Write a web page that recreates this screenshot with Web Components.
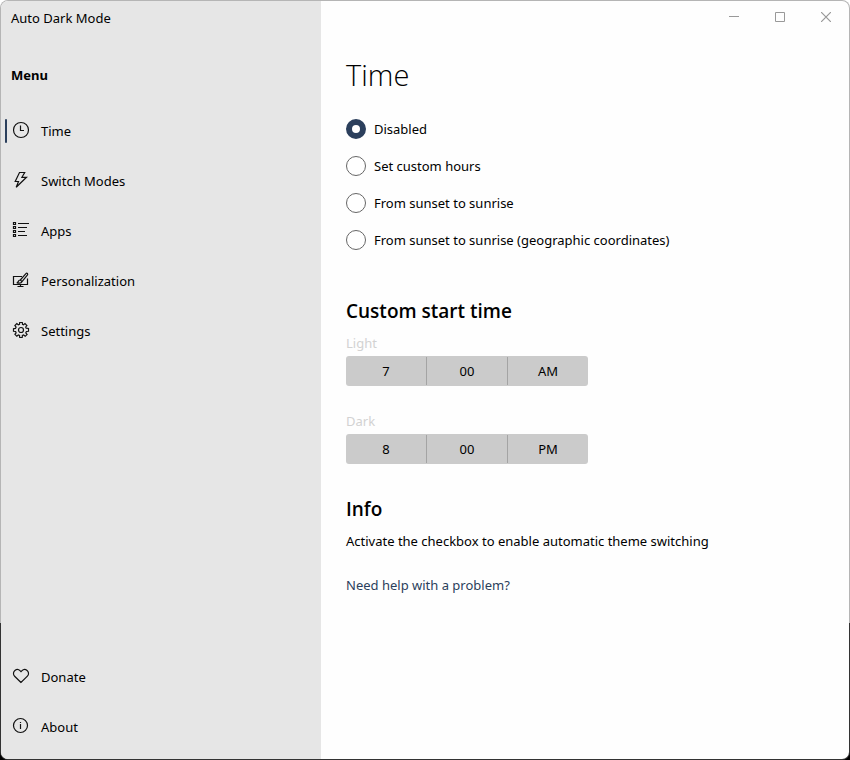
<!DOCTYPE html>
<html lang="en">
<head>
<meta charset="utf-8">
<meta name="viewport" content="width=device-width, initial-scale=1">
<title>Auto Dark Mode</title>
<style>
  html, body {
    margin: 0;
    height: 100%;
  }

  body {
    background: linear-gradient(#fff 50%, #000 50%);
    color: #000;
    font: 13px/20px "Noto Sans", "Open Sans", sans-serif;
    --accent: #2b3f5c;
  }
</style>
</head>
<body>
<app-window>
  <app-sidebar slot="sidebar" heading="Auto Dark Mode">
    <nav-item icon="time" active>Time</nav-item>
    <nav-item icon="switch">Switch Modes</nav-item>
    <nav-item icon="apps">Apps</nav-item>
    <nav-item icon="personalization">Personalization</nav-item>
    <nav-item icon="settings">Settings</nav-item>
    <nav-item slot="footer" icon="donate">Donate</nav-item>
    <nav-item slot="footer" icon="about">About</nav-item>
  </app-sidebar>
  <time-page></time-page>
</app-window>

<script>
const ICONS = {
  time: '<circle cx="8" cy="8" r="7.5"/><path d="M7.5 3.500v5H11"/>',
  switch: '<path d="M6.500.5h5.200L8.900 5.300h4.600L3.200 15.300l2.300-5.800H2.200z"/>',
  apps: `<path d="M.5.5h2v2h-2zM.5 4.500h2v2h-2zM.5 8.500h2v2h-2zM.5 12.500h2v2h-2z"/>
    <path d="M5 1.500h11M5 5.500h9M5 9.500h7M5 13.500h9"/>`,
  personalization: `<path d="M9 4.500H.5v8h14V6.500M7.500 12.500v2M4.500 14.500h6"/>
    <path d="M7.300 8 12.700 1.800q1-1 1.700-.4.700.7-.1 1.800L9 9.600zM7.300 8q-1.600.1-2 1.500-.3 1-1.500 1.300 4.500 1.100 5.200-1.200"/>`,
  settings: `<circle cx="8" cy="8" r="2.500"/>
    <path d="M6.500 2.400 6.700.5h2.600l.2 1.900 1 .4 1.500-1.200L13.900 3.500l-1.200 1.500.5 1.200 2.300.3v2.800l-2.100.2-.6 1.300 1.300 1.600-1.900 1.900-1.600-1.300-1.200.5-.2 2H6.700l-.2-2-1.200-.5-1.500 1.200-1.900-1.900 1.200-1.500-.5-1.300L.5 9.300V6.700l2-.3.6-1.300-1.200-1.600 1.900-1.900 1.500 1.200z"/>`,
  donate: '<path d="M8 14.500 1.600 8.200C-.1 6.500.2 3.700 1.900 2.400 3.600 1.100 5.700 1.300 7 2.700l1 1 1-1c1.300-1.400 3.400-1.600 5.100-.3 1.700 1.300 2 4.100.3 5.800z"/>',
  about: '<circle cx="7.500" cy="7.500" r="7"/><path d="M7.500 6v5M7.500 4v1"/>'
};

class AppWindow extends HTMLElement {
  constructor() {
    super();
    this.attachShadow({ mode: 'open' });
    this.shadowRoot.innerHTML = `
      <style>
        :host {
          display: block;
          box-sizing: border-box;
          min-height: 100vh;
          padding: 1px;
          border-radius: 8px;
          background: linear-gradient(#b5b5b5 82%, #333 82%);
        }

        .frame {
          display: grid;
          grid-template-columns: 320px 1fr;
          min-height: calc(100vh - 2px);
          border-radius: 7px;
          overflow: hidden;
          background: #fefefe;
        }

        .pane {
          display: flex;
          flex-direction: column;
        }
      </style>
      <div class="frame">
        <slot name="sidebar"></slot>
        <div class="pane">
          <window-controls></window-controls>
          <slot></slot>
        </div>
      </div>
    `;
  }
}

class WindowControls extends HTMLElement {
  constructor() {
    super();
    this.attachShadow({ mode: 'open' });
    this.shadowRoot.innerHTML = `
      <style>
        :host {
          display: flex;
          justify-content: flex-end;
        }

        button {
          display: grid;
          place-items: center;
          width: 46px;
          height: 32px;
          padding: 0;
          border: 0;
          background: none;
        }

        svg {
          width: 10px;
          height: 10px;
          fill: none;
          stroke: #999;
        }
      </style>
      <button aria-label="Minimize"><svg viewBox="0 0 10 10"><path d="M0 4.500h10"/></svg></button>
      <button aria-label="Maximize"><svg viewBox="0 0 10 10"><path d="M.5.5h9v9h-9z"/></svg></button>
      <button aria-label="Close"><svg viewBox="0 0 10 10"><path stroke-width="1.200" d="M0 0l10 10M10 0L0 10"/></svg></button>
    `;
  }
}

class AppSidebar extends HTMLElement {
  constructor() {
    super();
    this.attachShadow({ mode: 'open' });
    this.shadowRoot.innerHTML = `
      <style>
        :host {
          display: flex;
          flex-direction: column;
          padding: 7px 0;
          background: #e6e6e6;
        }

        header {
          padding: 0 10px;
        }

        h2 {
          margin: 37px 10px 21px;
          font-size: 13px;
          font-weight: 700;
        }

        .footer {
          margin-top: auto;
        }
      </style>
      <header>${this.getAttribute('heading')}</header>
      <h2>Menu</h2>
      <nav><slot></slot></nav>
      <div class="footer"><slot name="footer"></slot></div>
    `;
  }
}

class NavItem extends HTMLElement {
  constructor() {
    super();
    this.attachShadow({ mode: 'open' });
    this.shadowRoot.innerHTML = `
      <style>
        :host {
          display: block;
        }

        a {
          display: grid;
          grid-template-columns: 2px 16px 1fr;
          column-gap: 6px;
          align-items: center;
          height: 50px;
          padding-left: 4px;
          color: inherit;
          text-decoration: none;
        }

        .mark {
          height: 24px;
          border-radius: 1px;
        }

        :host([active]) .mark {
          background: var(--accent);
        }

        svg {
          width: 16px;
          height: 16px;
          margin-bottom: 2px;
          overflow: visible;
          fill: none;
          stroke: #111;
          stroke-width: 1.2;
        }

        .label {
          padding-left: 6px;
        }
      </style>
      <a href="#${this.getAttribute('icon')}">
        <span class="mark"></span>
        <svg viewBox="0 0 16 16" aria-hidden="true">${ICONS[this.getAttribute('icon')]}</svg>
        <span class="label"><slot></slot></span>
      </a>
    `;
  }
}

class TimePicker extends HTMLElement {
  constructor() {
    super();
    this.attachShadow({ mode: 'open' });
    const parts = this.getAttribute('value').split(' ');
    this.shadowRoot.innerHTML = `
      <style>
        :host {
          display: block;
        }

        .label {
          height: 20px;
          margin-bottom: 3px;
          color: #d2d2d2;
        }

        .picker {
          display: grid;
          grid-template-columns: 80px 81px 81px;
          width: max-content;
          padding: 1px 0;
          border-radius: 3px;
          background: #cbcbcb;
        }

        button {
          height: 28px;
          padding: 0 0 1px;
          border: 0;
          background: none;
          color: #000;
          font: inherit;
        }

        button + button {
          border-left: 1px solid #a4a4a4;
        }
      </style>
      <div class="label" id="label"><slot></slot></div>
      <div class="picker" role="group" aria-labelledby="label">
        ${parts.map(part => `<button disabled>${part}</button>`).join('')}
      </div>
    `;
  }
}

class ModeOptions extends HTMLElement {
  constructor() {
    super();
    this.attachShadow({ mode: 'open' });
    const options = [
      'Disabled',
      'Set custom hours',
      'From sunset to sunrise',
      'From sunset to sunrise (geographic coordinates)'
    ];
    this.shadowRoot.innerHTML = `
      <style>
        :host {
          display: grid;
          gap: 17px;
        }

        label {
          display: flex;
          align-items: center;
          gap: 8px;
        }

        input {
          appearance: none;
          box-sizing: border-box;
          flex: none;
          width: 20px;
          height: 20px;
          margin: 0;
          border: 1px solid #666;
          border-radius: 50%;
          background: #fff;
        }

        input:checked {
          border: 6px solid var(--accent);
        }
      </style>
      ${options.map((text, i) => `
        <label><input type="radio" name="mode" ${i === 0 ? 'checked' : ''}>${text}</label>
      `).join('')}
    `;
  }
}

class TimePage extends HTMLElement {
  constructor() {
    super();
    this.attachShadow({ mode: 'open' });
    this.shadowRoot.innerHTML = `
      <style>
        :host {
          display: block;
          padding: 22px 25px;
        }

        h1 {
          margin: 0 0 24px;
          font-family: "Open Sans", "Noto Sans", sans-serif;
          font-size: 29px;
          line-height: 40px;
          font-weight: 300;
        }

        h2 {
          margin: 0;
          font-family: "Open Sans", "Noto Sans", sans-serif;
          font-size: 19px;
          line-height: 28px;
          font-weight: 600;
        }

        mode-options {
          margin-bottom: 47px;
        }

        time-picker {
          margin: 8px 0 25px;
        }

        time-picker + time-picker {
          margin-bottom: 31px;
        }

        p {
          margin: 8px 0 24px;
        }

        a {
          color: var(--accent);
          text-decoration: none;
        }
      </style>
      <h1>Time</h1>
      <mode-options></mode-options>
      <h2>Custom start time</h2>
      <time-picker value="7 00 AM">Light</time-picker>
      <time-picker value="8 00 PM">Dark</time-picker>
      <h2>Info</h2>
      <p>Activate the checkbox to enable automatic theme switching</p>
      <a href="#help">Need help with a problem?</a>
    `;
  }
}

customElements.define('window-controls', WindowControls);
customElements.define('nav-item', NavItem);
customElements.define('app-sidebar', AppSidebar);
customElements.define('mode-options', ModeOptions);
customElements.define('time-picker', TimePicker);
customElements.define('time-page', TimePage);
customElements.define('app-window', AppWindow);
</script>
</body>
</html>
